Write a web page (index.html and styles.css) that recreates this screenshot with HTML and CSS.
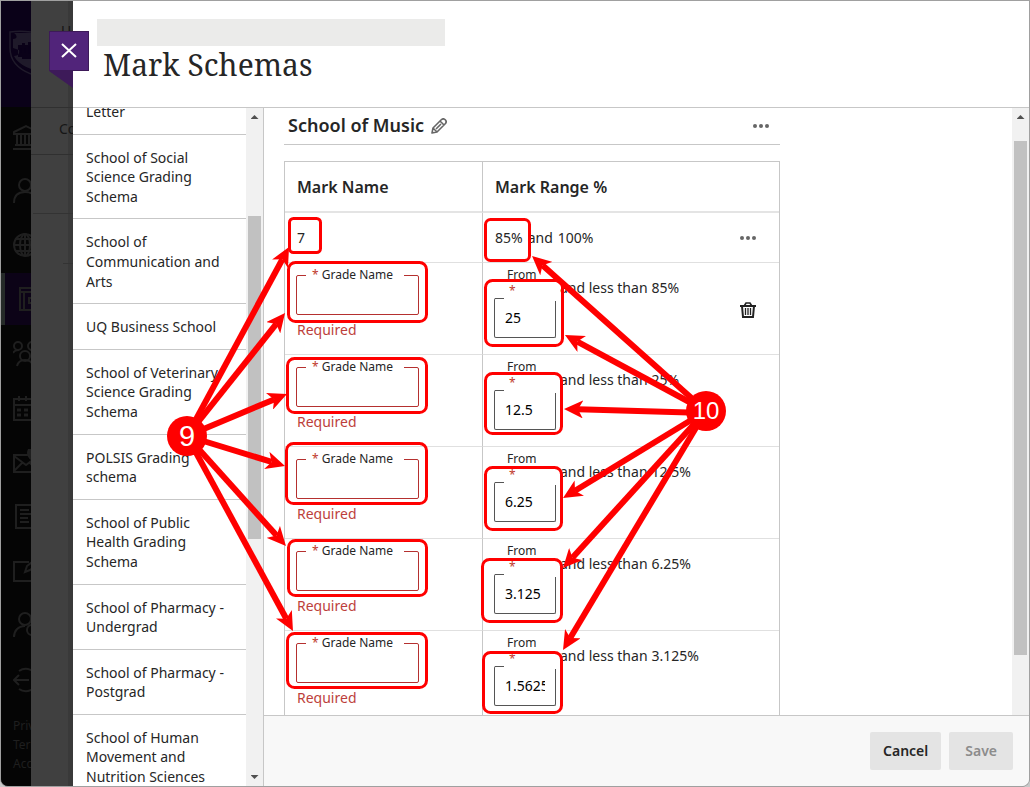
FILE: index.html
```html
<!DOCTYPE html>
<html lang="en">
<head>
<meta charset="utf-8">
<title>Mark Schemas</title>
<link rel="stylesheet" href="styles.css">
</head>
<body>
<div class="window">
  <nav class="rail" aria-label="Main">
    <div class="rail-brand">
      <svg width="22" height="48" viewBox="0 0 22 48" fill="none" stroke="#1f1a2a" stroke-width="1.5"><path d="M22 2C15 1 7 1 1 2v16c0 12 8 21 21 26"/><path fill="#1f1a2a" stroke="none" d="M5 3h17v9h-3v3h-3v-2h-3v2H9v12h4v2h9v10C14 36 7 31 5 26c4 0 6-3 5-6L4 18V9c4 0 5-3 1-6z"/><path d="M12 18v5M16 18v5M20 16v8" stroke="#0a0118"/></svg>
    </div>
    <div class="rail-items">
      <a class="rail-item" href="#" aria-label="Institution"><svg class="icon" viewBox="0 0 26 26"><path d="M1 8l12-6 12 6v2H1zM4 11v9M8 11v9M12 11v9M16 11v9M20 11v9M2 21h22M0 25h26"/></svg></a>
      <a class="rail-item" href="#" aria-label="Profile"><svg class="icon" viewBox="0 0 26 26"><circle cx="12" cy="7" r="6"/><path d="M1 25c0-7 4-11 11-11s11 4 11 11"/></svg></a>
      <a class="rail-item" href="#" aria-label="Activity"><svg class="icon" viewBox="0 0 26 26"><circle cx="12" cy="13" r="11"/><ellipse cx="12" cy="13" rx="5" ry="11"/><path d="M12 2v22M1 13h22M3 7h18M3 19h18"/></svg></a>
      <a class="rail-item rail-item-active" href="#" aria-label="Courses"><svg class="icon" viewBox="0 0 26 26"><path d="M2 2h22v22H2zM6 7v17M2 6h22M26 12H11v5h15"/></svg></a>
      <a class="rail-item rail-group" href="#" aria-label="Organisations"><svg class="icon" viewBox="0 0 26 26"><circle cx="5" cy="5" r="4"/><circle cx="19" cy="5" r="4"/><circle cx="12" cy="15" r="5"/><path d="M0 12c1-2 3-3 6-3M24 12c-1-2-3-3-6-3M4 25c1-4 4-6 8-6s7 2 8 6"/></svg></a>
      <a class="rail-item" href="#" aria-label="Calendar"><svg class="icon" viewBox="0 0 26 26"><path d="M1 4h24v21H1zM1 10h24M6 1v5M13 1v5M20 1v5"/><path stroke-dasharray="4 3" stroke-width="3" d="M4 15h20M4 20h20"/></svg></a>
      <a class="rail-item" href="#" aria-label="Messages"><svg class="icon" viewBox="0 0 26 26"><path d="M1 6h24v17H1zM1 7l12 9 12-9M1 22l8-8M25 22l-8-8"/><circle class="icon-fill" cx="22" cy="4" r="7"/></svg></a>
      <a class="rail-item rail-group" href="#" aria-label="Grades"><svg class="icon" viewBox="0 0 26 26"><path d="M3 1h20v23H3zM7 6h9M7 10h12M7 14h8M7 18h9"/></svg></a>
      <a class="rail-item" href="#" aria-label="Tools"><svg class="icon" viewBox="0 0 26 26"><path d="M16 4H1v19h22v-8M12 14l2-6 9-7 3 4-9 7z"/></svg></a>
      <a class="rail-item" href="#" aria-label="Admin"><svg class="icon" viewBox="0 0 26 26"><circle cx="12" cy="7" r="6"/><circle cx="19" cy="18" r="5"/><path d="M1 25c0-6 4-11 11-11"/></svg></a>
      <a class="rail-item rail-group" href="#" aria-label="Sign Out"><svg class="icon" viewBox="0 0 26 26"><path d="M16 13H1M6 8l-5 5 5 5M6 4C13-1 24 3 24 13S13 27 6 22"/></svg></a>
    </div>
    <div class="rail-links">
      <a href="#">Priv</a>
      <a href="#">Ter</a>
      <a href="#">Acc</a>
    </div>
  </nav>

  <div class="backdrop" aria-hidden="true">
    <div class="backdrop-brand">U</div>
    <div class="backdrop-tab">Co</div>
    <div class="backdrop-row"></div>
    <div class="backdrop-row backdrop-row-inset"></div>
  </div>

  <section class="panel">
    <button class="close" aria-label="Close"><svg width="16" height="16" viewBox="0 0 16 16" fill="none" stroke="#fff" stroke-width="2"><path d="M1 1l14 13M15 1L1 14"/></svg></button>
    <header class="panel-header">
      <div class="redacted"></div>
      <h1 class="panel-title">Mark Schemas</h1>
    </header>

    <div class="panel-body">
      <nav class="schemas" aria-label="Schemas">
        <ul class="schema-list">
          <li><a class="schema" href="#">Letter</a></li>
          <li><a class="schema" href="#">School of Social Science Grading Schema</a></li>
          <li><a class="schema" href="#">School of Communication and Arts</a></li>
          <li><a class="schema" href="#">UQ Business School</a></li>
          <li><a class="schema" href="#">School of Veterinary Science Grading Schema</a></li>
          <li><a class="schema" href="#">POLSIS Grading schema</a></li>
          <li><a class="schema" href="#">School of Public Health Grading Schema</a></li>
          <li><a class="schema" href="#">School of Pharmacy - Undergrad</a></li>
          <li><a class="schema" href="#">School of Pharmacy - Postgrad</a></li>
          <li><a class="schema" href="#">School of Human Movement and Nutrition Sciences</a></li>
        </ul>
        <div class="scrollbar scrollbar-list">
          <span class="arrow arrow-up"></span><span class="thumb"></span><span class="arrow arrow-down"></span>
        </div>
      </nav>

      <div class="content">
        <div class="scroll-area">
          <main class="editor">
            <div class="schema-head">
              <h2 class="schema-title">School of Music</h2>
              <button class="icon-button" aria-label="Edit name"><svg width="16" height="16" viewBox="0 0 16 16" fill="none" stroke="#666" stroke-width="1.6" stroke-linejoin="round"><path d="M1 15l1-5 8-8c3-3 7 1 4 4l-8 8zM9 3l4 4M5 11l5-5M2 10l4 4"/></svg></button>
              <button class="icon-button more" aria-label="Schema options"><svg width="16" height="4" viewBox="0 0 16 4" fill="#666"><circle cx="2" cy="2" r="2"/><circle cx="8" cy="2" r="2"/><circle cx="14" cy="2" r="2"/></svg></button>
            </div>

            <table class="marks">
              <thead>
                <tr><th class="name-col">Mark Name</th><th>Mark Range %</th></tr>
              </thead>
              <tbody>
                <tr class="fixed-row">
                  <td>7</td>
                  <td><div class="fixed-range"><span>85%</span><span>and</span><span>100%</span>
                    <button class="icon-button more" aria-label="Row options"><svg width="16" height="4" viewBox="0 0 16 4" fill="#666"><circle cx="2" cy="2" r="2"/><circle cx="8" cy="2" r="2"/><circle cx="14" cy="2" r="2"/></svg></button></div></td>
                </tr>
                <tr class="edit-row">
                  <td><fieldset class="grade"><legend><label for="g1"><span class="star">*</span> Grade Name</label></legend><input id="g1" type="text"></fieldset><div class="error">Required</div></td>
                  <td><div class="range"><div class="from"><label for="f1">From<span class="star">*</span></label><div class="from-box"><input id="f1" type="text" value="25"></div></div><span class="less">and less than</span><span class="limit">85%</span>
                    <button class="icon-button trash" aria-label="Delete row"><svg width="16" height="16" viewBox="0 0 16 16" fill="none" stroke="#222"><path stroke-width="2" d="M0 4h16M2 4l1 11h10l1-11"/><path stroke-width="1.6" d="M4.500 3.500L6 1h4l1.500 2.500"/><path stroke-width="1.3" d="M5.500 6v7M8 6v7M10.500 6v7"/></svg></button></div></td>
                </tr>
                <tr class="edit-row">
                  <td><fieldset class="grade"><legend><label for="g2"><span class="star">*</span> Grade Name</label></legend><input id="g2" type="text"></fieldset><div class="error">Required</div></td>
                  <td><div class="range"><div class="from"><label for="f2">From<span class="star">*</span></label><div class="from-box"><input id="f2" type="text" value="12.5"></div></div><span class="less">and less than</span><span class="limit">25%</span></div></td>
                </tr>
                <tr class="edit-row">
                  <td><fieldset class="grade"><legend><label for="g3"><span class="star">*</span> Grade Name</label></legend><input id="g3" type="text"></fieldset><div class="error">Required</div></td>
                  <td><div class="range"><div class="from"><label for="f3">From<span class="star">*</span></label><div class="from-box"><input id="f3" type="text" value="6.25"></div></div><span class="less">and less than</span><span class="limit">12.5%</span></div></td>
                </tr>
                <tr class="edit-row">
                  <td><fieldset class="grade"><legend><label for="g4"><span class="star">*</span> Grade Name</label></legend><input id="g4" type="text"></fieldset><div class="error">Required</div></td>
                  <td><div class="range"><div class="from"><label for="f4">From<span class="star">*</span></label><div class="from-box"><input id="f4" type="text" value="3.125"></div></div><span class="less">and less than</span><span class="limit">6.25%</span></div></td>
                </tr>
                <tr class="edit-row">
                  <td><fieldset class="grade"><legend><label for="g5"><span class="star">*</span> Grade Name</label></legend><input id="g5" type="text"></fieldset><div class="error">Required</div></td>
                  <td><div class="range"><div class="from"><label for="f5">From<span class="star">*</span></label><div class="from-box"><input id="f5" type="text" value="1.5625"></div></div><span class="less">and less than</span><span class="limit">3.125%</span></div></td>
                </tr>
              </tbody>
            </table>
          </main>
          <div class="scrollbar scrollbar-main">
            <span class="arrow arrow-up"></span><span class="thumb"></span>
          </div>
        </div>
        <footer class="actions">
          <button class="button">Cancel</button>
          <button class="button" disabled>Save</button>
        </footer>
      </div>
    </div>
  </section>
</div>

<svg class="callouts" width="1030" height="787" viewBox="0 0 1030 787">
  <defs>
    <marker id="head" markerUnits="userSpaceOnUse" markerWidth="20" markerHeight="18" refX="5" refY="9" orient="auto"><path d="M0 0L19 9L0 18L5 9Z" fill="#f00"/></marker>
  </defs>
  <g fill="none" stroke="#f00" stroke-width="3">
    <rect x="289.5" y="218.5" width="31" height="34" rx="4"/>
    <rect x="288.5" y="262.5" width="138" height="59" rx="7"/>
    <rect x="287.5" y="358.5" width="139" height="54" rx="7"/>
    <rect x="286.5" y="443.5" width="140" height="60" rx="7"/>
    <rect x="288.5" y="540.5" width="138" height="55" rx="7"/>
    <rect x="287.5" y="633.5" width="139" height="54" rx="7"/>
    <rect x="485.5" y="219.5" width="44" height="41" rx="5"/>
    <rect x="485.5" y="280.5" width="77" height="65" rx="7"/>
    <rect x="485.5" y="373.5" width="76" height="60" rx="7"/>
    <rect x="485.5" y="467.5" width="76" height="62" rx="7"/>
    <rect x="482.5" y="559.5" width="79" height="62" rx="7"/>
    <rect x="483.5" y="652.5" width="78" height="60" rx="7"/>
  </g>
  <g stroke="#f00" stroke-width="6">
    <path marker-end="url(#head)" d="M187 436L282.4 259.3"/>
    <path marker-end="url(#head)" d="M187 436L276.3 323.9"/>
    <path marker-end="url(#head)" d="M187 436L274.1 399.4"/>
    <path marker-end="url(#head)" d="M187 436L271.6 461.9"/>
    <path marker-end="url(#head)" d="M187 436L276.6 535.6"/>
    <path marker-end="url(#head)" d="M187 436L286.3 618.7"/>
    <path marker-end="url(#head)" d="M706 411L542.5 265.3"/>
    <path marker-end="url(#head)" d="M706 411L577.3 341.6"/>
    <path marker-end="url(#head)" d="M706 413L578 409.3"/>
    <path marker-end="url(#head)" d="M706 411L575 490.7"/>
    <path marker-end="url(#head)" d="M706 411L572.4 557.7"/>
    <path marker-end="url(#head)" d="M706 411L570.2 638"/>
  </g>
  <circle cx="187" cy="436" r="20" fill="#f00"/>
  <circle cx="706" cy="411" r="20" fill="#f00"/>
  <text class="callout-number callout-large" x="187" y="446">9</text>
  <text class="callout-number" x="706" y="419">10</text>
</svg>
</body>
</html>
```
FILE: styles.css
```css
* { box-sizing: border-box; }

body {
  margin: 0;
  background: #c8c8c8;
  color: #262626;
  font-family: "Noto Sans", "Open Sans", sans-serif;
  font-size: 14px;
  line-height: 1.4;
}

a { color: inherit; text-decoration: none; }
button, input { font: inherit; color: inherit; }
button { border: 0; padding: 0; background: none; cursor: pointer; }

.window {
  display: flex;
  height: 100vh;
  border: 1px solid #a0a0a0;
  border-radius: 0 0 8px 8px;
  overflow: hidden;
  background: #404040;
}

/* Dimmed page behind the panel */
.rail {
  display: flex;
  flex-direction: column;
  flex: none;
  width: 30px;
  overflow: hidden;
  background: #050505;
  color: #1f1f1f;
}
.rail-brand { height: 106px; padding: 29px 0 0 8px; background: #0a0118; }
.rail-items { display: flex; flex-direction: column; gap: 2px; padding-top: 4px; }
.rail-item { display: flex; align-items: center; height: 52px; padding-left: 12px; }
.rail-item-active { background: #0c0317; border-left: 4px solid #252a28; padding-left: 13px; }
.rail-group { margin-top: 1px; }
.icon { flex: none; width: 26px; height: 26px; fill: none; stroke: #1f1f1f; stroke-width: 2; }
.icon-fill { fill: #1f1f1f; }
.rail-links { display: flex; flex-direction: column; padding: 10px 0 0 12px; font-size: 12px; line-height: 19px; }

.backdrop {
  flex: none;
  width: 42px;
  overflow: hidden;
  background: linear-gradient(to right, #404040 37px, #393939 37px);
  color: #161616;
}
.backdrop-brand { height: 107px; padding: 20px 0 0 30px; border-bottom: 1px solid #303030; }
.backdrop-tab { height: 47px; padding: 11px 0 0 28px; border-bottom: 1px solid #303030; }
.backdrop-row { height: 59px; margin-left: 2px; border-bottom: 1px solid #333; }
.backdrop-row-inset { height: 50px; margin-left: 32px; }

/* Panel */
.panel { position: relative; display: flex; flex: 1; flex-direction: column; min-width: 0; background: #fff; }
.close {
  position: absolute;
  top: 30px;
  left: -24px;
  display: grid;
  place-items: center;
  width: 40px;
  height: 40px;
  border: 1px solid #3d1a59;
  background: #51247a;
}
.close::after {
  content: "";
  position: absolute;
  top: 39px;
  left: -1px;
  width: 24px;
  height: 17px;
  background: #3d1a59;
  clip-path: polygon(0 0, 100% 0, 100% 100%);
}
.panel-header { flex: none; height: 107px; padding: 18px 24px 0; border-bottom: 1px solid #c7c7c7; }
.redacted { width: 348px; max-width: 100%; height: 27px; background: #ebebea; }
.panel-title { margin: 0 0 0 6px; font-family: "Noto Serif", "DejaVu Serif", serif; font-size: 30px; font-weight: 400; line-height: 38px; }
.panel-body { display: flex; flex: 1; min-height: 0; }

/* Schema list */
.schemas { display: flex; flex: none; width: 191px; border-right: 1px solid #c7c7c7; overflow: hidden; }
.schema-list { flex: 1; margin: -19px 0 0; padding: 0; list-style: none; }
.schema { display: block; padding: 13px 12px 12px 13px; border-bottom: 1px solid #c7c7c7; }

/* Scrollbars */
.scrollbar { display: flex; flex: none; flex-direction: column; align-items: center; width: 17px; background: #f1f1f1; }
.scrollbar-list { justify-content: space-between; }
.thumb { width: 13px; background: #c1c1c1; }
.scrollbar-list .thumb { flex: 0 0 323px; margin-bottom: 140px; }
.scrollbar-main .thumb { height: 514px; margin-top: 22px; }
.arrow { flex: none; width: 8px; height: 4px; background: #505050; }
.arrow-up { margin-top: 7px; clip-path: polygon(50% 0, 100% 100%, 0 100%); }
.arrow-down { margin-bottom: 7px; clip-path: polygon(0 0, 100% 0, 50% 100%); }

/* Editor */
.content { display: flex; flex: 1; flex-direction: column; min-width: 0; }
.scroll-area { display: flex; flex: 1; min-height: 0; overflow: hidden; }
.editor { flex: 1; min-width: 0; padding: 0 20px; }
.schema-head {
  display: flex;
  align-items: center;
  gap: 7px;
  max-width: 496px;
  height: 37px;
  padding: 0 11px 1px 4px;
  border-bottom: 1px solid #c7c7c7;
}
.schema-title { margin: 0; font-size: 18px; font-weight: 600; }
.icon-button { display: flex; align-items: center; }
.more { margin-left: auto; }

.marks {
  width: 100%;
  max-width: 496px;
  margin-top: 16px;
  border: 1px solid #c7c7c7;
  border-collapse: separate;
  border-spacing: 0;
  table-layout: fixed;
}
.marks th { height: 51px; padding: 2px 12px 0; border-bottom: 2px solid #e4e4e4; font-size: 16px; font-weight: 600; text-align: left; }
.marks td { padding: 0 12px; border-bottom: 1px solid #e0e0e0; vertical-align: top; }
.marks th + th, .marks td + td { border-left: 1px solid #c7c7c7; }
.name-col { width: 197px; }
.marks .fixed-row td { height: 50px; vertical-align: middle; }
.fixed-range { display: flex; align-items: center; gap: 5px; padding-right: 11px; }
.marks .edit-row td { height: 92px; padding: 4px 12px 0 11px; }

.grade { width: 123px; height: 48px; margin: 0; padding: 0; border: 1px solid #b5302f; border-radius: 2px; }
.grade legend { width: 98px; margin-left: 9px; padding: 0 0 0 6px; font-size: 12px; line-height: 16px; white-space: nowrap; }
.grade input { display: block; width: 100%; height: 28px; padding: 0 10px; border: 0; outline: 0; background: none; }
.error { padding: 5px 0 0 1px; color: #bd3f3c; }
.star { color: #c0392b; }

.range { display: flex; align-items: flex-start; }
.from { width: 62px; margin-right: 4px; }
.from label { display: block; padding-left: 13px; font-size: 12px; line-height: 16px; }
.from .star { display: block; padding-left: 2px; line-height: 15px; }
.from-box { position: relative; border: 1px solid #555; border-top: 0; border-radius: 2px; }
.from-box::before { content: ""; position: absolute; top: 0; left: 0; width: 9px; border-top: 1px solid #555; }
.from-box::after { content: ""; position: absolute; top: 0; right: -1px; width: 2px; height: 3px; background: #fff; }
.from-box input { display: block; width: 100%; height: 39px; padding: 0 10px; border: 0; outline: 0; background: none; color: #000; }
.less, .limit { padding-top: 11px; white-space: nowrap; }
.limit { margin-left: 4px; }
.trash { margin: 35px 11px 0 auto; }

/* Footer */
.actions { display: flex; flex: none; justify-content: flex-end; gap: 8px; height: 71px; padding: 16px 16px 0; border-top: 1px solid #c7c7c7; background: #f8f8f8; }
.button { height: 38px; padding: 0 13px; border-radius: 2px; background: #e4e4e4; font-weight: 600; }
.button:disabled { padding: 0 16px; color: #8c8c8c; cursor: default; }

/* Numbered callouts drawn over the page */
.callouts { position: absolute; top: 0; left: 0; pointer-events: none; }
.callout-number { fill: #fff; font-family: "Liberation Sans", Arial, sans-serif; font-size: 24px; text-anchor: middle; }
.callout-large { font-size: 29px; }
```
